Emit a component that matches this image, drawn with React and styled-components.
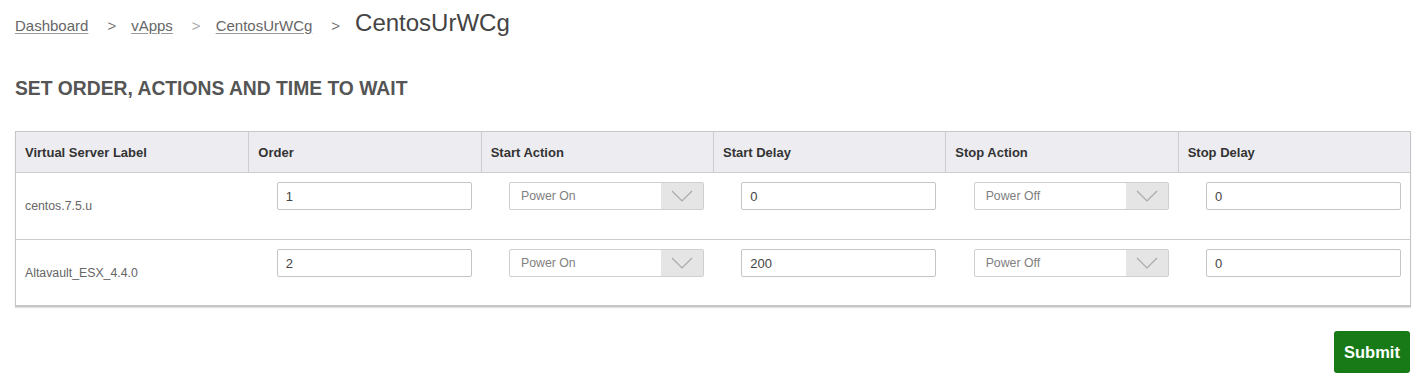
import styled, { createGlobalStyle } from 'styled-components';

const Global = createGlobalStyle`
	body {
		margin: 0;
		background: #fff;
		font-family: 'Liberation Sans', Arial, Helvetica, sans-serif;
		color: #555;
	}
`;

const Page = styled.div`
	padding: 0 15px 0 15px;
	width: 1396px;
`;

const Crumbs = styled.nav`
	display: flex;
	align-items: baseline;
	height: 46px;
	a {
		color: #666;
		font-size: 15px;
		text-decoration: underline;
		text-decoration-color: #999;
		text-underline-offset: 2px;
	}
	.sep {
		color: #777;
		font-size: 15px;
		margin: 0 15px 0 19px;
	}
	.sep.light {
		color: #aaa;
	}
	.current {
		font-size: 24px;
		color: #444;
		line-height: 46px;
		margin-left: 0;
	}
`;

const Title = styled.h2`
	margin: 33px 0 0;
	font-size: 19.3px;
	font-weight: bold;
	color: #555;
	line-height: 20px;
`;

const Table = styled.div`
	margin-top: 32px;
	border: 1px solid #c6c6c6;
	border-bottom: 2px solid #c6c6c6;
	box-shadow: 0 1px 1px rgba(0, 0, 0, 0.12);
	display: grid;
	grid-template-columns: repeat(6, 1fr);
`;

const Head = styled.div`
	height: 40px;
	display: flex;
	align-items: center;
	padding: 0 9px;
	background: #ededf1;
	border-bottom: 1px solid #cdcdcd;
	border-left: ${(p) => (p.first ? 'none' : '1px solid #cdcdcd')};
	font-size: 13px;
	font-weight: bold;
	color: #333;
`;

const Cell = styled.div`
	height: 66px;
	box-sizing: border-box;
	display: flex;
	justify-content: ${(p) => (p.label ? 'flex-start' : 'flex-end')};
	align-items: ${(p) => (p.label ? 'center' : 'flex-start')};
	padding: ${(p) => (p.label ? '0 9px' : '9px 9px 0')};
	border-top: ${(p) => (p.top ? '1px solid #cdcdcd' : 'none')};
	font-size: 12.3px;
	color: #666;
`;

const Input = styled.div`
	width: 195px;
	height: 28px;
	box-sizing: border-box;
	border: 1px solid #c4c4c4;
	border-radius: 2px;
	padding: 0 8px;
	display: flex;
	align-items: center;
	font-size: 13px;
	color: #444;
	background: #fff;
`;

const Select = styled.div`
	width: 195px;
	height: 28px;
	box-sizing: border-box;
	border: 1px solid #cfcfcf;
	border-radius: 2px;
	display: flex;
	font-size: 12.3px;
	color: #808080;
	background: #fff;
	span {
		flex: 1;
		display: flex;
		align-items: center;
		padding-left: 11px;
	}
	i {
		width: 42px;
		background: #e5e5e5;
		display: flex;
		align-items: center;
		justify-content: center;
	}
`;

const Footer = styled.div`
	display: flex;
	justify-content: flex-end;
	margin-top: 24px;
`;

const Button = styled.button`
	width: 76px;
	height: 42px;
	margin-right: 1px;
	border: none;
	border-radius: 3px;
	background: #177a17;
	color: #fff;
	font-family: inherit;
	font-size: 16.5px;
	font-weight: bold;
`;

const Chevron = () => (
	<svg width="22" height="12" viewBox="0 0 22 12">
		<path d="M1 1 L11 11 L21 1" fill="none" stroke="#a9a9a9" strokeWidth="1.2" />
	</svg>
);

const heads = ['Virtual Server Label', 'Order', 'Start Action', 'Start Delay', 'Stop Action', 'Stop Delay'];
const rows = [
	{ name: 'centos.7.5.u', order: '1', start: 'Power On', sd: '0', stop: 'Power Off', pd: '0' },
	{ name: 'Altavault_ESX_4.4.0', order: '2', start: 'Power On', sd: '200', stop: 'Power Off', pd: '0' },
];

const App = () => {
	return (
		<Page>
			<Global />
			<Crumbs>
				<a>Dashboard</a>
				<span className="sep">&gt;</span>
				<a>vApps</a>
				<span className="sep light">&gt;</span>
				<a>CentosUrWCg</a>
				<span className="sep">&gt;</span>
				<span className="current">CentosUrWCg</span>
			</Crumbs>
			<Title>SET ORDER, ACTIONS AND TIME TO WAIT</Title>
			<Table>
				{heads.map((h, i) => (
					<Head key={h} first={i === 0}>
						{h}
					</Head>
				))}
				{rows.map((r, i) => (
					<>
						<Cell label top={i > 0}>{r.name}</Cell>
						<Cell top={i > 0}>
							<Input>{r.order}</Input>
						</Cell>
						<Cell top={i > 0}>
							<Select>
								<span>{r.start}</span>
								<i>
									<Chevron />
								</i>
							</Select>
						</Cell>
						<Cell top={i > 0}>
							<Input>{r.sd}</Input>
						</Cell>
						<Cell top={i > 0}>
							<Select>
								<span>{r.stop}</span>
								<i>
									<Chevron />
								</i>
							</Select>
						</Cell>
						<Cell top={i > 0}>
							<Input>{r.pd}</Input>
						</Cell>
					</>
				))}
			</Table>
			<Footer>
				<Button>Submit</Button>
			</Footer>
		</Page>
	);
};

export default App;
